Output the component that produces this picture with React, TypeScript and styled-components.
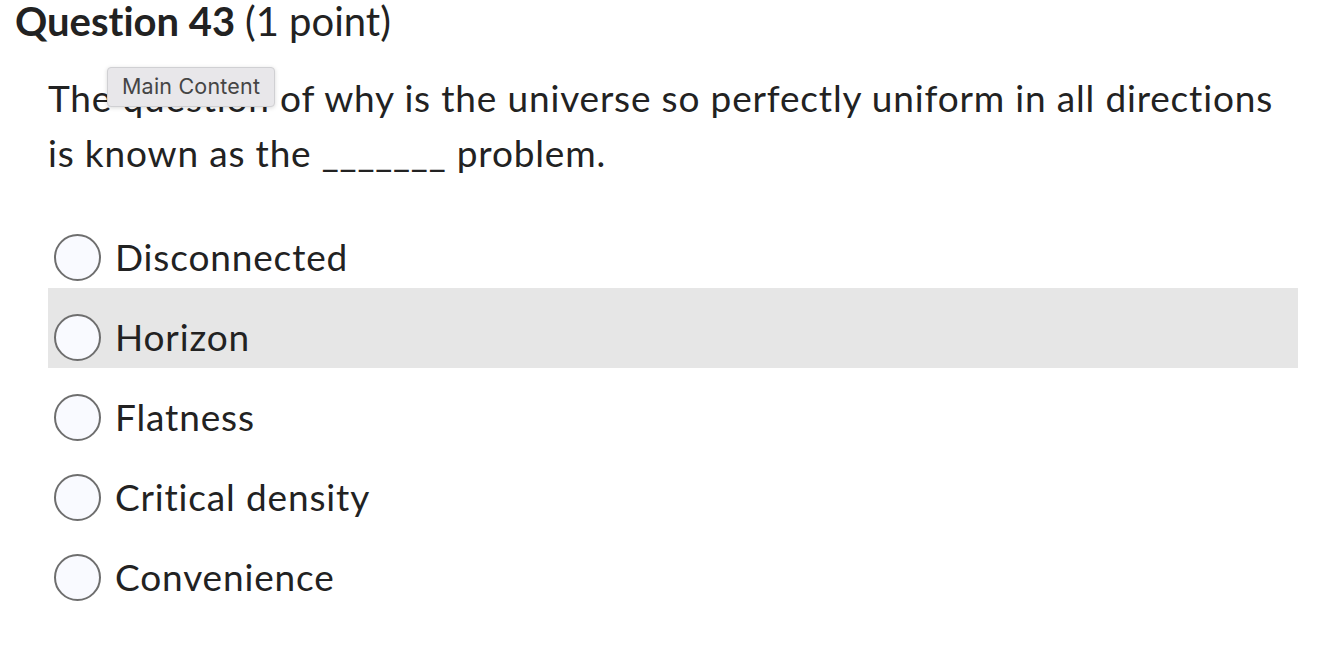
import React from "react";
import styled, { createGlobalStyle } from "styled-components";

const Global = createGlobalStyle`
  html, body { margin: 0; padding: 0; background: #fff; }
  body {
    font-family: Lato, "Noto Sans", sans-serif;
    color: #222;
    font-variant-ligatures: none;
  }
`;

const Page = styled.div`
  width: 1332px;
  height: 658px;
  overflow: hidden;
`;

const Header = styled.h2`
  margin: 0;
  padding: 0 0 0 15px;
  font-size: 40px;
  line-height: 42px;
  font-weight: 700;
  color: #222;
  span { font-weight: 400; }
`;

const Body = styled.div`
  padding: 28px 34px 0 48px;
`;

const QuestionText = styled.p`
  position: relative;
  margin: 0;
  font-size: 37px;
  letter-spacing: 0.83px;
  line-height: 55px;
  color: #222;
`;

const Tooltip = styled.div`
  position: absolute;
  left: 59px;
  top: -3px;
  padding: 4px 14px 5px;
  background: #e8e7ea;
  border: 1px solid #d0d0d3;
  border-radius: 4px;
  box-shadow: 0 1px 4px rgba(0, 0, 0, 0.15);
  font-family: Inter, "Open Sans", sans-serif;
  font-size: 21.5px;
  letter-spacing: 0.2px;
  line-height: 29px;
  color: #454545;
  white-space: nowrap;
`;

const Options = styled.div`
  margin-top: 28px;
  display: flex;
  flex-direction: column;
  width: 1250px;
`;

const Option = styled.label<{ $hover?: boolean }>`
  box-sizing: border-box;
  display: flex;
  align-items: center;
  height: 80px;
  padding: 16px 0 0 6px;
  gap: 14px;
  background: ${(p) => (p.$hover ? "#e6e6e6" : "transparent")};
  font-size: 37px;
  letter-spacing: 0.85px;
  color: #222;
`;

const Radio = styled.span`
  width: 43px;
  height: 43px;
  margin-top: 3px;
  border-radius: 50%;
  border: 2px solid #6e6e6e;
  background: #f9faff;
  flex: none;
`;

const options = ["Disconnected", "Horizon", "Flatness", "Critical density", "Convenience"];

export default function App() {
  return (
    <Page>
      <Global />
      <Header>
        Question 43 <span>(1 point)</span>
      </Header>
      <Body>
        <QuestionText>
          The question of why is the universe so perfectly uniform in all directions is known as the _______ problem.
          <Tooltip>Main Content</Tooltip>
        </QuestionText>
        <Options>
          {options.map((o, i) => (
            <Option key={o} $hover={i === 1}>
              <Radio />
              {o}
            </Option>
          ))}
        </Options>
      </Body>
    </Page>
  );
}
